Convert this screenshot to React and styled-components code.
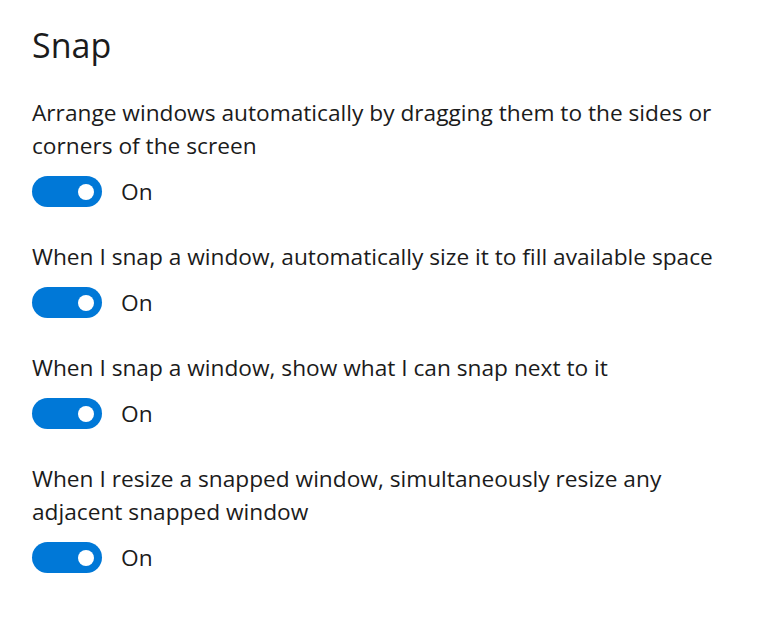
import styled, { createGlobalStyle } from 'styled-components';

const GlobalStyle = createGlobalStyle`
    html, body {
        margin: 0;
        padding: 0;
        background: #fff;
    }
    body {
        font-family: "Open Sans", "Noto Sans", sans-serif;
        color: #1b1b1b;
    }
`

const Page = styled.div`
    width: 768px;
    height: 620px;
    box-sizing: border-box;
    padding: 22px 0 0 32px;
    background: #fff;
    overflow: hidden;
`

const Title = styled.h1`
    margin: 0 0 28px;
    font-size: 34px;
    font-weight: 400;
    line-height: 46px;
    color: #1b1b1b;
`

const Setting = styled.div`
    width: 725px;
    margin-bottom: 33px;
`

const Label = styled.p`
    margin: 0 0 14px;
    font-size: 22.7px;
    line-height: 33px;
`

const ToggleRow = styled.div`
    display: flex;
    align-items: center;
    gap: 19px;
`

const Track = styled.div`
    width: 70px;
    height: 31px;
    border-radius: 16px;
    background: ${props => props.$on ? '#0078d7' : '#fff'};
    border: ${props => props.$on ? 'none' : '2px solid #333'};
    box-sizing: border-box;
    position: relative;
    flex-shrink: 0;
`

const Knob = styled.div`
    position: absolute;
    top: 7.5px;
    right: 8px;
    width: 16px;
    height: 16px;
    border-radius: 50%;
    background: #fff;
`

const State = styled.span`
    font-size: 22.7px;
    line-height: 31px;
`

const settings = [
    'Arrange windows automatically by dragging them to the sides or corners of the screen',
    'When I snap a window, automatically size it to fill available space',
    'When I snap a window, show what I can snap next to it',
    'When I resize a snapped window, simultaneously resize any adjacent snapped window',
]

function Toggle({ on }) {
    return (
        <ToggleRow>
            <Track $on={on}>
                <Knob />
            </Track>
            <State>{on ? 'On' : 'Off'}</State>
        </ToggleRow>
    );
}

export default function App() {
    return (
        <Page>
            <GlobalStyle />
            <Title>Snap</Title>
            {settings.map(text => (
                <Setting key={text}>
                    <Label>{text}</Label>
                    <Toggle on />
                </Setting>
            ))}
        </Page>
    );
}
